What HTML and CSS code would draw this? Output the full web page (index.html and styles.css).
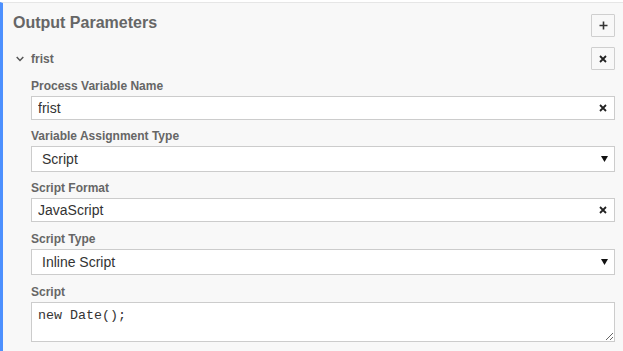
FILE: index.html
```html
<!DOCTYPE html>
<html>
<head>
<meta charset="utf-8">
<link rel="stylesheet" href="styles.css">
</head>
<body>
<div class="panel">
  <div class="header">
    <h2 class="title">Output Parameters</h2>
    <button class="icon-btn" type="button">
      <svg width="9" height="9" viewBox="0 0 9 9"><path d="M4.5 0.5V8.5M0.5 4.5H8.5" stroke="#333" stroke-width="1.6" fill="none"/></svg>
    </button>
  </div>
  <div class="param">
    <div class="param-head">
      <span class="chev"><svg width="8" height="6" viewBox="0 0 8 6"><path d="M0.7 1L4 4.4L7.3 1" stroke="#555" stroke-width="1.5" fill="none"/></svg></span>
      <span class="param-name">frist</span>
      <button class="icon-btn" type="button">
        <svg width="8" height="8" viewBox="0 0 8 8"><path d="M1 1L7 7M7 1L1 7" stroke="#222" stroke-width="1.8" fill="none"/></svg>
      </button>
    </div>
    <div class="fields">
      <div class="field">
        <label class="label">Process Variable Name</label>
        <div class="box">
          <input class="text" type="text" value="frist">
          <span class="clear"><svg width="8" height="8" viewBox="0 0 8 8"><path d="M1 1L7 7M7 1L1 7" stroke="#222" stroke-width="1.8" fill="none"/></svg></span>
        </div>
      </div>
      <div class="field">
        <label class="label">Variable Assignment Type</label>
        <div class="box box-select">
          <select class="select"><option>Script</option></select>
          <span class="arrow"><svg width="7" height="6" viewBox="0 0 7 6"><path d="M0 0H7L3.5 6Z" fill="#111"/></svg></span>
        </div>
      </div>
      <div class="field">
        <label class="label">Script Format</label>
        <div class="box">
          <input class="text" type="text" value="JavaScript">
          <span class="clear"><svg width="8" height="8" viewBox="0 0 8 8"><path d="M1 1L7 7M7 1L1 7" stroke="#222" stroke-width="1.8" fill="none"/></svg></span>
        </div>
      </div>
      <div class="field field-gap">
        <label class="label">Script Type</label>
        <div class="box box-select">
          <select class="select"><option>Inline Script</option></select>
          <span class="arrow"><svg width="7" height="6" viewBox="0 0 7 6"><path d="M0 0H7L3.5 6Z" fill="#111"/></svg></span>
        </div>
      </div>
      <div class="field field-gap">
        <label class="label">Script</label>
        <textarea class="area">new Date();</textarea>
      </div>
    </div>
  </div>
</div>
</body>
</html>
```

FILE: styles.css
```css
html, body {
  margin: 0;
  padding: 0;
  background: #ffffff;
}
body {
  font-family: "Liberation Sans", Arial, sans-serif;
}
.panel {
  margin-top: 2px;
  border-top: 1px solid #e6e6e6;
  border-left: 3px solid #4d90fe;
  background: #f8f8f8;
  padding: 11px 8px 12px 10px;
  min-height: 340px;
  box-sizing: border-box;
}
.header {
  display: flex;
  align-items: flex-start;
  justify-content: space-between;
}
.title {
  margin: -1px 0 0 0;
  font-size: 16px;
  line-height: 20px;
  font-weight: bold;
  color: #666;
}
.icon-btn {
  width: 24px;
  height: 23px;
  padding: 0;
  margin: 0;
  border: 1px solid #cfcfcf;
  border-radius: 1px;
  background: #f8f8f8;
  display: flex;
  align-items: center;
  justify-content: center;
  cursor: pointer;
}
.param {
  margin-top: 10px;
}
.param-head {
  display: flex;
  align-items: center;
}
.chev {
  width: 18px;
  padding-left: 3px;
  box-sizing: border-box;
  display: flex;
  align-items: center;
}
.param-name {
  flex: 1;
  font-size: 12px;
  font-weight: bold;
  color: #666;
}
.fields {
  margin-left: 18px;
  padding-top: 8px;
  display: flex;
  flex-direction: column;
  gap: 8px;
}
.field {
  display: flex;
  flex-direction: column;
}
.field-gap {
  margin-top: 1px;
}
.label {
  font-size: 12px;
  line-height: 16px;
  font-weight: bold;
  color: #666;
  margin-bottom: 2px;
}
.box {
  display: flex;
  align-items: center;
  height: 24px;
  box-sizing: border-box;
  border: 1px solid #ccc;
  background: #fff;
}
.box-select {
  height: 26px;
}
.text {
  flex: 1;
  min-width: 0;
  height: 100%;
  border: none;
  outline: none;
  background: transparent;
  padding: 0 0 0 6px;
  margin: 0;
  font-family: "Liberation Sans", Arial, sans-serif;
  font-size: 14px;
  color: #333;
}
.clear {
  width: 22px;
  display: flex;
  align-items: center;
  justify-content: center;
}
.select {
  flex: 1;
  min-width: 0;
  height: 100%;
  border: none;
  outline: none;
  background: transparent;
  -webkit-appearance: none;
  appearance: none;
  padding: 0 0 0 10px;
  margin: 0;
  font-family: "Liberation Sans", Arial, sans-serif;
  font-size: 14px;
  color: #333;
}
.arrow {
  width: 20px;
  display: flex;
  align-items: center;
  justify-content: center;
}
.area {
  display: block;
  width: 100%;
  height: 40px;
  box-sizing: border-box;
  border: 1px solid #ccc;
  background: #fff;
  margin: 0;
  padding: 4px 6px;
  font-family: "Liberation Mono", "Courier New", monospace;
  font-size: 13.33px;
  line-height: 18px;
  color: #333;
  resize: vertical;
  outline: none;
}
```
